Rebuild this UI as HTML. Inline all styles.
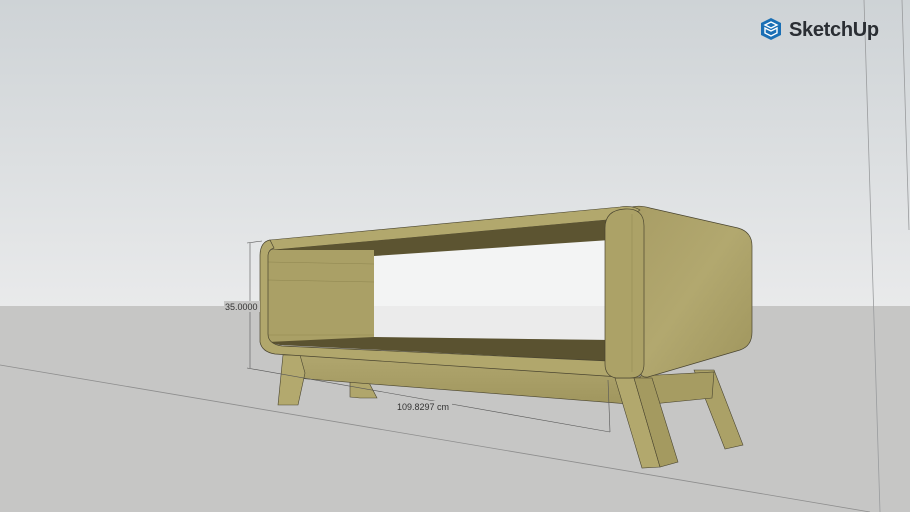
<!DOCTYPE html>
<html><head><meta charset="utf-8"><style>
html,body{margin:0;padding:0;width:910px;height:512px;overflow:hidden;font-family:"Liberation Sans",sans-serif}
</style></head><body>
<svg width="910" height="512" viewBox="0 0 910 512" xmlns="http://www.w3.org/2000/svg">
<defs>
<linearGradient id="sky" x1="0" y1="0" x2="0" y2="1">
<stop offset="0" stop-color="#ced3d6"/><stop offset="1" stop-color="#e9eaeb"/>
</linearGradient>
<linearGradient id="wood" x1="0" y1="0" x2="1" y2="1">
<stop offset="0" stop-color="#a89d65"/><stop offset="0.5" stop-color="#b2a86f"/><stop offset="1" stop-color="#9f955d"/>
</linearGradient>
<linearGradient id="wood2" x1="0" y1="0" x2="0" y2="1">
<stop offset="0" stop-color="#b1a76f"/><stop offset="1" stop-color="#a0965e"/>
</linearGradient>
</defs>
<rect width="910" height="306" fill="url(#sky)"/>
<rect y="306" width="910" height="206" fill="#c6c6c5"/>
<line x1="864" y1="0" x2="880" y2="512" stroke="#9a9c9e" stroke-width="0.8"/>
<line x1="902" y1="0" x2="909" y2="230" stroke="#9a9c9e" stroke-width="0.8"/>
<line x1="0" y1="365" x2="870" y2="512" stroke="#8d8d8d" stroke-width="0.8"/>

<!-- back legs -->
<polygon points="350,375 365,375 377,398 360,398 350,397" fill="#b0a66c" stroke="#4a4530" stroke-width="0.6"/>
<polygon points="694,370 714,370 743,445 725,449" fill="#aba167" stroke="#4a4530" stroke-width="0.6"/>
<!-- base rail -->
<polygon points="288,352 620,377 640,377 642,405 295,378" fill="url(#wood2)" stroke="#4a4530" stroke-width="0.6"/>
<polygon points="640,376 714,372 712,398 642,405" fill="#a69c62" stroke="#4a4530" stroke-width="0.6"/>
<!-- front left leg -->
<polygon points="283,355 300,355 305,373 298,405 278,405" fill="#b3a96e" stroke="#4a4530" stroke-width="0.6"/>
<!-- front right leg -->
<polygon points="615,378 634,378 660,467 642,468" fill="#b2a86d" stroke="#4a4530" stroke-width="0.6"/>
<polygon points="634,378 652,378 678,462 660,467" fill="#a49a60" stroke="#4a4530" stroke-width="0.6"/>

<!-- right side panel -->
<path d="M632,207 Q640,205 650,208 L738,228 Q752,232 752,246 L752,332 Q752,346 740,350 L648,377 Q640,378 640,370 Z" fill="url(#wood)" stroke="#4a4530" stroke-width="0.7"/>
<!-- top surface -->
<path d="M270,240 L620,207 Q632,205 640,210 L628,218 L385,240 L272,250 Z" fill="#b2a86d" stroke="#4a4530" stroke-width="0.6"/>
<!-- dark inner top -->
<polygon points="272,250 628,218 632,240 385,256 300,258" fill="#5c5431"/>
<!-- inner back left panel -->
<rect x="266" y="250" width="108" height="94" fill="#aaa066"/>
<line x1="268" y1="262" x2="374" y2="264" stroke="#8f8650" stroke-width="0.6"/>
<line x1="268" y1="280" x2="374" y2="282" stroke="#8f8650" stroke-width="0.6"/>
<line x1="268" y1="335" x2="374" y2="335" stroke="#8f8650" stroke-width="0.6"/>
<!-- opening showing background -->
<polygon points="374,256 610,240 610,306 374,306" fill="#f3f4f4"/>
<polygon points="374,306 610,306 610,340 374,337" fill="#ebebeb"/>
<!-- dark inner bottom -->
<polygon points="268,342 374,337 610,340 630,350 625,362 280,345" fill="#5a5230"/>
<!-- front frame: left edge -->
<path d="M270,240 Q260,242 260,256 L260,342 Q262,352 275,354 L620,377 L630,362 L282,346 Q268,344 268,334 L268,256 Q268,250 274,248 Z" fill="#b1a76c" stroke="#4a4530" stroke-width="0.7"/>
<!-- front right post (solid) -->
<path d="M605,228 Q605,210 625,209 Q644,208 644,226 L644,364 Q644,378 630,378 L616,378 Q605,376 605,364 Z" fill="#aca267" stroke="#4a4530" stroke-width="0.7"/>
<line x1="632" y1="214" x2="632" y2="372" stroke="#8f8650" stroke-width="0.5"/>

<!-- dimensions -->
<line x1="250" y1="243" x2="250" y2="368" stroke="#555" stroke-width="0.6"/>
<line x1="247" y1="243" x2="262" y2="241" stroke="#555" stroke-width="0.6"/>
<line x1="247" y1="368" x2="610" y2="432" stroke="#555" stroke-width="0.6"/>
<line x1="608" y1="380" x2="610" y2="432" stroke="#555" stroke-width="0.6"/>
<rect x="224" y="301" width="36" height="11" fill="#c6c6c5"/>
<text x="225" y="310" font-size="9" fill="#333">35.0000</text>
<rect x="396" y="401" width="56" height="11" fill="#c6c6c5"/>
<text x="397" y="410" font-size="9" fill="#333">109.8297 cm</text>

<!-- logo -->
<g transform="translate(761,18)">
<path d="M10,0 L20,5 L20,17 L10,22 L0,17 L0,5 Z" fill="#1a6fb5"/>
<path d="M4,7 L10,4 L16,7 L10,10 Z M4,10 L10,13 L16,10 L16,15 L10,18 L4,15 Z" fill="none" stroke="#fff" stroke-width="1.4"/>
</g>
<text x="789" y="36" font-size="20" fill="#2a2e33" font-weight="bold" letter-spacing="-0.3">SketchUp</text>
</svg>
</body></html>
